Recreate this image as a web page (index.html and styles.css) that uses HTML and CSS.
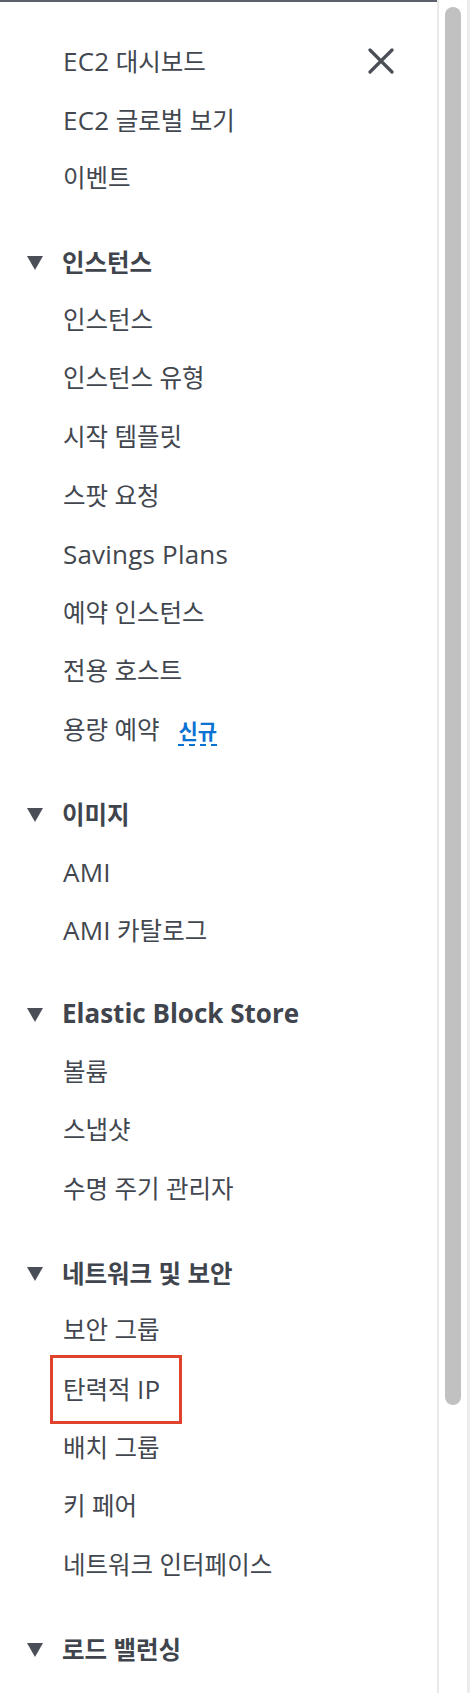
FILE: index.html
```html
<!DOCTYPE html>
<html lang="ko">
<head>
    <meta charset="utf-8">
    <title>EC2 탐색</title>
    <link rel="stylesheet" href="styles.css">
</head>
<body>
    <div class="page">
        <div class="nav">
            <div class="topbar"></div>
            <div class="nav-top">
                <ul class="links">
                    <li><a href="#"><span class="en">EC2</span> 대시보드</a></li>
                    <li><a href="#"><span class="en">EC2</span> 글로벌 보기</a></li>
                    <li><a href="#">이벤트</a></li>
                </ul>
                <button class="close" aria-label="닫기">
                    <svg width="26" height="26" viewBox="0 0 26 26">
                        <path d="M2 2 L24 24 M24 2 L2 24" stroke="#4a4f57" stroke-width="3.2" stroke-linecap="round" fill="none"/>
                    </svg>
                </button>
            </div>

            <div class="section">
                <div class="section-title">
                    <svg class="caret" width="16" height="14" viewBox="0 0 16 14"><polygon points="0,0 16,0 8,14" fill="#4a4f57"/></svg>
                    인스턴스
                </div>
                <ul class="links">
                    <li><a href="#">인스턴스</a></li>
                    <li><a href="#">인스턴스 유형</a></li>
                    <li><a href="#">시작 템플릿</a></li>
                    <li><a href="#">스팟 요청</a></li>
                    <li><a href="#"><span class="en">Savings Plans</span></a></li>
                    <li><a href="#">예약 인스턴스</a></li>
                    <li><a href="#">전용 호스트</a></li>
                    <li><a href="#">용량 예약</a><span class="badge">신규</span></li>
                </ul>
            </div>

            <div class="section">
                <div class="section-title">
                    <svg class="caret" width="16" height="14" viewBox="0 0 16 14"><polygon points="0,0 16,0 8,14" fill="#4a4f57"/></svg>
                    이미지
                </div>
                <ul class="links">
                    <li><a href="#"><span class="en">AMI</span></a></li>
                    <li><a href="#"><span class="en">AMI</span> 카탈로그</a></li>
                </ul>
            </div>

            <div class="section">
                <div class="section-title">
                    <svg class="caret" width="16" height="14" viewBox="0 0 16 14"><polygon points="0,0 16,0 8,14" fill="#4a4f57"/></svg>
                    <span class="en">Elastic Block Store</span>
                </div>
                <ul class="links">
                    <li><a href="#">볼륨</a></li>
                    <li><a href="#">스냅샷</a></li>
                    <li><a href="#">수명 주기 관리자</a></li>
                </ul>
            </div>

            <div class="section">
                <div class="section-title">
                    <svg class="caret" width="16" height="14" viewBox="0 0 16 14"><polygon points="0,0 16,0 8,14" fill="#4a4f57"/></svg>
                    네트워크 및 보안
                </div>
                <ul class="links">
                    <li><a href="#">보안 그룹</a></li>
                    <li><a href="#" class="marked">탄력적 <span class="en">IP</span></a></li>
                    <li><a href="#">배치 그룹</a></li>
                    <li><a href="#">키 페어</a></li>
                    <li><a href="#">네트워크 인터페이스</a></li>
                </ul>
            </div>

            <div class="section">
                <div class="section-title">
                    <svg class="caret" width="16" height="14" viewBox="0 0 16 14"><polygon points="0,0 16,0 8,14" fill="#4a4f57"/></svg>
                    로드 밸런싱
                </div>
            </div>
        </div>

        <div class="scrollbar">
            <div class="thumb"></div>
        </div>
    </div>
</body>
</html>
```

FILE: styles.css
```css
body {
    margin: 0;
    background-color: #ffffff;
    font-family: 'Open Sans', 'Noto Sans CJK KR', sans-serif;
    color: #4a4f57;
}

.page {
    display: flex;
    min-height: 1693px;
}

.nav {
    flex: 1;
    padding-bottom: 12px;
}

.topbar {
    height: 2px;
    background-color: #5b606a;
    margin-bottom: 30px;
}

.nav-top {
    display: flex;
    justify-content: space-between;
    align-items: flex-start;
    padding-right: 43px;
}

.links {
    list-style: none;
    margin: 0;
    padding: 0;
}

.links li {
    height: 58.6px;
    line-height: 58.6px;
    padding-left: 63px;
    font-size: 24.5px;
    white-space: nowrap;
}

.links a {
    color: #42474f;
    text-decoration: none;
}

/* latin text renders a touch larger than the hangul in the original */
.en {
    font-size: 26px;
    letter-spacing: 0.2px;
}

.close {
    background: none;
    border: none;
    padding: 0;
    margin-top: 16px;
    width: 26px;
    height: 26px;
    cursor: pointer;
}

.section {
    margin-top: 24.4px;
}

.section-title {
    display: flex;
    align-items: center;
    gap: 19px;
    height: 58.6px;
    padding-left: 27px;
    font-size: 24.5px;
    font-weight: bold;
    color: #40454d;
    white-space: nowrap;
}

.section-title .en {
    letter-spacing: 0;
}

.caret {
    flex-shrink: 0;
    margin-top: 3px;
}

.badge {
    margin-left: 19px;
    font-size: 21px;
    font-weight: bold;
    color: #0972d3;
    text-decoration: underline dashed;
    text-underline-offset: 6px;
    text-decoration-thickness: 1.5px;
}

.marked {
    position: relative;
}

.marked::after {
    content: "";
    position: absolute;
    left: -13px;
    right: -22px;
    top: -18px;
    bottom: -18px;
    border: 3px solid #e0432c;
}

.scrollbar {
    width: 28px;
    flex-shrink: 0;
    border-left: 2px solid #e9e9e9;
    border-right: 3px solid #ececec;
    margin-right: 4px;
    padding-top: 7px;
    display: flex;
    justify-content: center;
}

.thumb {
    width: 16px;
    height: 1398px;
    background-color: #c1c1c1;
    border-radius: 8px;
}
```
